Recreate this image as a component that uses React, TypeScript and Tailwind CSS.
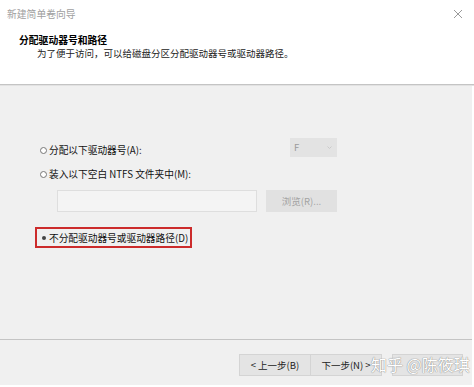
import React from "react";

const font = { fontFamily: '"Noto Sans CJK SC", "Noto Sans", sans-serif' };

function Radio({ checked }: { checked?: boolean }) {
  return (
    <span className="relative inline-block w-[7px] h-[7px] rounded-full border border-[#777] bg-white shrink-0">
      {checked && <span className="absolute left-[1px] top-[1px] w-[3px] h-[3px] rounded-full bg-[#222]" />}
    </span>
  );
}

export default function App() {
  return (
    <div className="relative w-[474px] h-[387px] overflow-hidden bg-white text-[#111]" style={font}>
      {/* title bar */}
      <div className="flex h-[27px] items-center justify-between pl-[7px] pr-[11px]">
        <span className="text-[9.8px] leading-[12px] text-[#a0a0a0]">新建简单卷向导</span>
        <svg width="10" height="10" viewBox="0 0 10 10" className="mt-[1px]">
          <path d="M1 1 L9 9 M9 1 L1 9" stroke="#9a9a9a" strokeWidth="1" />
        </svg>
      </div>
      {/* header */}
      <div className="h-[57px] pl-[19px] pt-[8px]">
        <div className="text-[9.8px] leading-[11px] font-bold text-black">分配驱动器号和路径</div>
        <div className="pl-[18px] text-[9.5px] leading-[12px] mt-[1px] text-[#222]">
          为了便于访问，可以给磁盘分区分配驱动器号或驱动器路径。
        </div>
      </div>
      <div className="h-[1px] bg-[#c4c4c4]" />
      <div className="h-[1px] bg-[#e2e2e2]" />
      {/* content */}
      <div className="mr-[2px] flex h-[253px] flex-col bg-[#f0f0f0] pl-[40px] pt-[52px]">
        <div className="flex w-[297px] items-start justify-between">
          <div className="flex items-center gap-[2px] pt-[6px] text-[9.7px] leading-[12px]">
            <Radio />
            <span>分配以下驱动器号(A):</span>
          </div>
          <div className="flex h-[19px] w-[47px] items-center justify-between bg-[#e3e3e3] pl-[4px] pr-[5px] text-[9.5px] text-[#9a9a9a]">
            <span>F</span>
            <svg width="5" height="3" viewBox="0 0 5 3">
              <path d="M0.5 0.5 L2.5 2.5 L4.5 0.5" stroke="#c4c4c4" fill="none" strokeWidth="0.8" />
            </svg>
          </div>
        </div>
        <div className="mt-[11px] flex items-center gap-[2px] text-[9.7px] leading-[12px]">
          <Radio />
          <span>装入以下空白 NTFS 文件夹中(M):</span>
        </div>
        <div className="ml-[17px] mt-[10px] flex gap-[9px]">
          <div className="h-[22px] w-[200px] border border-[#dedede] bg-[#f4f4f4]" />
          <div className="flex h-[22px] w-[71px] items-center justify-center bg-[#e1e1e1] text-[9.5px] text-[#a3a3a3]">
            浏览(R)...
          </div>
        </div>
        <div className="ml-[-5px] mt-[15px] flex h-[21px] w-[157px] items-center gap-[3px] border-2 border-[#cc2b2b] pl-[5px] text-[9.7px] leading-[12px]">
          <span className="inline-block h-[4px] w-[4px] rounded-full bg-[#444]" />
          <span>不分配驱动器号或驱动器路径(D)</span>
        </div>
      </div>
      <div className="mr-[2px] h-[1px] bg-[#c4c4c4]" />
      {/* footer */}
      <div className="mr-[2px] flex h-[45px] justify-end bg-[#f0f0f0] pr-[9px] pt-[14px]">
        <div className="flex h-[22px]">
          <div className="flex w-[72px] items-center justify-center border border-[#d4d4d4] bg-[#e4e4e4] text-[9.5px] text-[#222]">
            &lt; 上一步(B)
          </div>
          <div className="flex w-[71px] items-center justify-center border border-l-0 border-[#d4d4d4] bg-[#e4e4e4] text-[9.5px] text-[#222]">
            下一步(N) &gt;
          </div>
          <div className="ml-[10px] w-[71px] border border-[#d4d4d4] bg-[#e4e4e4]" />
        </div>
      </div>
      {/* watermark */}
      <div className="absolute left-[371px] top-[354px] text-[16px] leading-[20px] text-white [text-shadow:0_0_1px_#8a8a8a,0_0_1px_#8a8a8a]">
        知乎 @陈筱琪
      </div>
    </div>
  );
}
